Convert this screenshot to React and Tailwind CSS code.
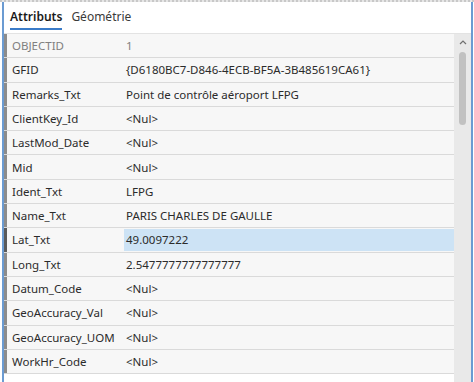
const rows = [
  { label: 'OBJECTID', value: '1', dim: true },
  { label: 'GFID', value: '{D6180BC7-D846-4ECB-BF5A-3B485619CA61}' },
  { label: 'Remarks_Txt', value: 'Point de contrôle aéroport LFPG' },
  { label: 'ClientKey_Id', value: '<Nul>' },
  { label: 'LastMod_Date', value: '<Nul>' },
  { label: 'Mid', value: '<Nul>' },
  { label: 'Ident_Txt', value: 'LFPG' },
  { label: 'Name_Txt', value: 'PARIS CHARLES DE GAULLE' },
  { label: 'Lat_Txt', value: '49.0097222', selected: true },
  { label: 'Long_Txt', value: '2.5477777777777777' },
  { label: 'Datum_Code', value: '<Nul>' },
  { label: 'GeoAccuracy_Val', value: '<Nul>' },
  { label: 'GeoAccuracy_UOM', value: '<Nul>' },
  { label: 'WorkHr_Code', value: '<Nul>' },
];

export default function App() {
  return (
    <div
      className="relative flex h-[382px] w-[474px] flex-col overflow-hidden bg-white text-[11.5px] text-[#2b2b2b]"
      style={{ fontFamily: '"Noto Sans", "Open Sans", sans-serif' }}
    >
      <div className="h-[2px] w-full bg-[repeating-linear-gradient(90deg,#c8c8c8_0_2px,#e6e6e6_2px_4px)]" />
      <div className="flex min-h-0 flex-1">
        <div className="w-[2px] bg-white" />
        <div className="w-[2px] bg-[#6b9bd2]" />
        <div className="flex min-w-0 flex-1 flex-col">
          {/* tabs */}
          <div className="flex h-[31px] items-start gap-[9px] pl-[6px] pt-[7px]">
            <div className="flex flex-col">
              <span className="text-[12px] font-semibold leading-[16px] text-[#1a1a1a]">Attributs</span>
              <div className="mt-[3px] h-[2px] bg-[#3a7bc8]" />
            </div>
            <span className="text-[12px] leading-[16px] text-[#3a3a3a]">Géométrie</span>
          </div>
          {/* grid */}
          <div className="flex min-h-0 flex-1 border-t border-[#e3e3e3]">
            <div className="flex min-w-0 flex-1 flex-col">
              {rows.map((r) => (
                <div key={r.label} className="flex h-[24.3px] shrink-0 border-b border-[#dadada] bg-[#f7f7f7]">
                  <div className={r.selected ? 'w-[3px] bg-[#5a5a5a]' : 'w-[3px] bg-[#8c8c8c]'} />
                  <div
                    className={
                      'flex w-[117px] shrink-0 items-center pl-[5px] ' +
                      (r.dim ? 'text-[#808080]' : 'text-[#2b2b2b]')
                    }
                  >
                    {r.label}
                  </div>
                  <div
                    className={
                      'my-[1px] flex flex-1 items-center pl-[2px] ' +
                      (r.selected ? 'bg-[#cde3f5]' : '') +
                      (r.dim ? ' text-[#808080]' : ' text-[#2b2b2b]')
                    }
                  >
                    {r.value}
                  </div>
                </div>
              ))}
            </div>
            {/* scrollbar */}
            <div className="relative w-[17px] shrink-0 bg-[#e9e9e9]">
              <svg className="absolute left-[5px] top-[6px]" width="8" height="5" viewBox="0 0 8 5">
                <path d="M1 4 L4 1 L7 4" fill="none" stroke="#707070" strokeWidth="1.2" />
              </svg>
              <div className="absolute left-[5px] top-[18px] h-[73px] w-[7px] rounded-full bg-[#c1c1c1]" />
            </div>
          </div>
        </div>
        <div className="w-[2px] bg-[#6b9bd2]" />
        <div className="w-[1px] bg-white" />
      </div>
    </div>
  );
}
